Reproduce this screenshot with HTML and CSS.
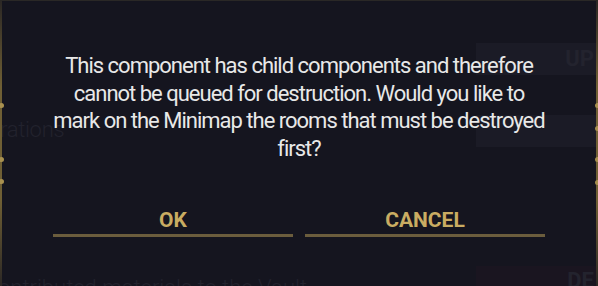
FILE: index.html
```html
<!DOCTYPE html>
<html>
<head>
<meta charset="utf-8">
<link rel="stylesheet" href="styles.css">
</head>
<body>
<div class="page">
  <div class="edge edge-l">
    <span class="dot d1"></span>
    <span class="dot d2"></span>
    <span class="dot d3"></span>
  </div>
  <div class="main">
    <div class="bg-text heading">rations</div>
    <div class="bg-text footer">ontributed materials to the Vault</div>
  </div>
  <div class="side">
    <div class="box box-up">UP</div>
    <div class="box box-plain"></div>
    <div class="box box-red">DE</div>
  </div>
  <div class="edge edge-r">
    <span class="dot r1"></span>
    <span class="dot r2"></span>
    <span class="dot r3"></span>
    <span class="dot r4"></span>
  </div>
</div>
<div class="modal">
  <p class="msg">This component has child components and therefore cannot be queued for destruction. Would you like to mark on the Minimap the rooms that must be destroyed first?</p>
  <div class="actions">
    <button class="btn">OK</button>
    <button class="btn">CANCEL</button>
  </div>
</div>
</body>
</html>
```
FILE: styles.css
```css
html, body {
  margin: 0;
  padding: 0;
}
body {
  width: 598px;
  height: 286px;
  overflow: hidden;
  position: relative;
  background: #15151f;
  font-family: "Roboto", "Noto Sans", sans-serif;
}
.page {
  display: flex;
  height: 286px;
  border-top: 1px solid #2a2826;
  box-sizing: border-box;
}
.edge {
  width: 2px;
  flex: none;
  display: flex;
  flex-direction: column;
  background: linear-gradient(to bottom, rgba(110, 95, 55, 0.25) 0%, #6f5f34 30%, #6f5f34 70%, rgba(110, 95, 55, 0.25) 100%);
}
.dot {
  display: block;
  width: 5px;
  height: 5px;
  border-radius: 50%;
  background: #a8904f;
  margin-left: -1.5px;
}
.d1 { margin-top: 102px; }
.d2 { margin-top: 49px; }
.d3 { margin-top: 17px; }
.r1 { margin-top: 102px; }
.r2 { margin-top: 18px; }
.r3 { margin-top: 26px; }
.r4 { margin-top: 18px; }
.main {
  flex: 1;
  display: flex;
  flex-direction: column;
  padding-top: 116px;
  overflow: hidden;
}
.bg-text {
  font-size: 22px;
  font-weight: 300;
  color: #22222d;
  white-space: nowrap;
}
.heading {
  margin-left: -2px;
  letter-spacing: -0.3px;
}
.footer {
  margin-top: auto;
  margin-bottom: -14px;
  margin-left: -4px;
}
.side {
  width: 120px;
  flex: none;
  display: flex;
  flex-direction: column;
  padding-top: 42px;
}
.box {
  height: 32px;
  background: #1b1b26;
  font-weight: 700;
  font-size: 22px;
  color: #23232e;
  text-align: right;
  padding-right: 2px;
  line-height: 32px;
  overflow: hidden;
}
.box-plain {
  margin-top: 40px;
}
.box-red {
  margin-top: auto;
  height: 20px;
  background: #1a1520;
  line-height: 30px;
}
.modal {
  position: absolute;
  inset: 0;
  display: flex;
  flex-direction: column;
  align-items: center;
  padding-top: 52px;
}
.msg {
  margin: 0;
  width: 492px;
  text-align: center;
  font-size: 22px;
  line-height: 27.5px;
  letter-spacing: -1px;
  color: #e8e8e8;
}
.actions {
  display: flex;
  gap: 12px;
  margin-top: 46px;
}
.btn {
  width: 240px;
  padding: 0 0 2px;
  margin: 0;
  background: none;
  border: none;
  border-bottom: 3px solid #6b5d3d;
  font-family: "Roboto", "Noto Sans", sans-serif;
  font-weight: 700;
  font-size: 21px;
  line-height: 24px;
  color: #c9ac62;
  text-align: center;
}
```
